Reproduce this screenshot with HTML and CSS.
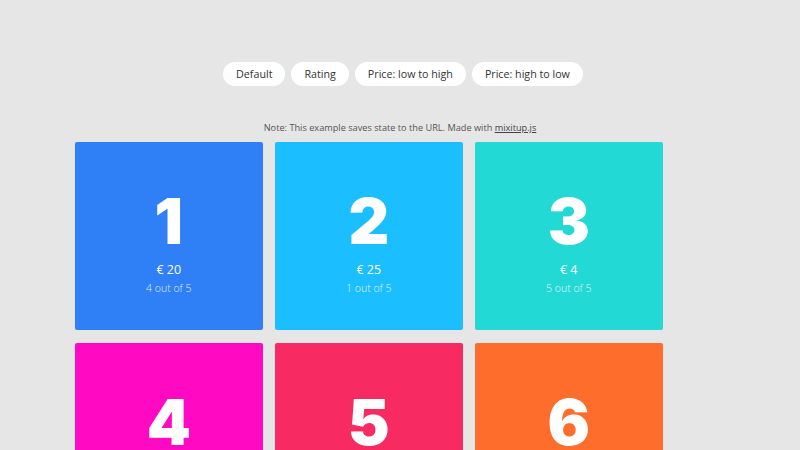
FILE: index.html
```html
<!DOCTYPE html>
<html lang="en">
<head>
<meta charset="utf-8">
<title>MixItUp sort demo</title>
<link rel="stylesheet" href="styles.css">
</head>
<body>
  <div class="controls">
    <button class="control" type="button">Default</button>
    <button class="control" type="button">Rating</button>
    <button class="control" type="button">Price: low to high</button>
    <button class="control" type="button">Price: high to low</button>
  </div>
  <p class="note">Note: This example saves state to the URL. Made with <a href="#">mixitup.js</a></p>
  <div class="grid">
    <div class="card c1"><div class="num">1</div><div class="price">€ 20</div><div class="rating">4 out of 5</div></div>
    <div class="card c2"><div class="num">2</div><div class="price">€ 25</div><div class="rating">1 out of 5</div></div>
    <div class="card c3"><div class="num">3</div><div class="price">€ 4</div><div class="rating">5 out of 5</div></div>
    <div class="card c4"><div class="num">4</div><div class="price">€ 12</div><div class="rating">2 out of 5</div></div>
    <div class="card c5"><div class="num">5</div><div class="price">€ 8</div><div class="rating">3 out of 5</div></div>
    <div class="card c6"><div class="num">6</div><div class="price">€ 15</div><div class="rating">4 out of 5</div></div>
  </div>
</body>
</html>
```
FILE: styles.css
```css
html, body {
  margin: 0;
  padding: 0;
}
body {
  background: #e6e6e6;
  font-family: "Open Sans", "Noto Sans", sans-serif;
  color: #333;
  overflow: hidden;
  height: 450px;
}
.controls {
  display: flex;
  justify-content: center;
  gap: 6px;
  padding-top: 62px;
  padding-left: 6px;
}
.control {
  height: 24px;
  padding: 0 13px;
  border: 0;
  border-radius: 12px;
  background: #fff;
  font-family: inherit;
  font-size: 10.7px;
  color: #333;
  cursor: pointer;
}
.note {
  margin: 35px 0 0;
  text-align: center;
  font-size: 9.2px;
  line-height: 14px;
  color: #555;
}
.note a {
  color: #444;
}
.grid {
  display: grid;
  grid-template-columns: repeat(3, 187.5px);
  gap: 13px 12.5px;
  padding-left: 75px;
  margin-top: 7px;
}
.card {
  height: 187.5px;
  border-radius: 2px;
  color: #fff;
  text-align: center;
  padding-top: 47px;
  box-sizing: border-box;
}
.num {
  font-family: Inter, "Open Sans", sans-serif;
  font-weight: 900;
  font-size: 63px;
  line-height: 64px;
}
.price {
  margin-top: 9px;
  font-size: 12.5px;
  line-height: 16px;
}
.rating {
  margin-top: 2px;
  font-size: 10.5px;
  line-height: 16px;
  font-weight: 300;
  opacity: 0.85;
}
.c1 { background: #2f7ff6; }
.c2 { background: #1bbefe; }
.c3 { background: #22d9d6; }
.c4 { background: #ff0ac2; }
.c5 { background: #f82a62; }
.c6 { background: #ff6d2c; }
```
